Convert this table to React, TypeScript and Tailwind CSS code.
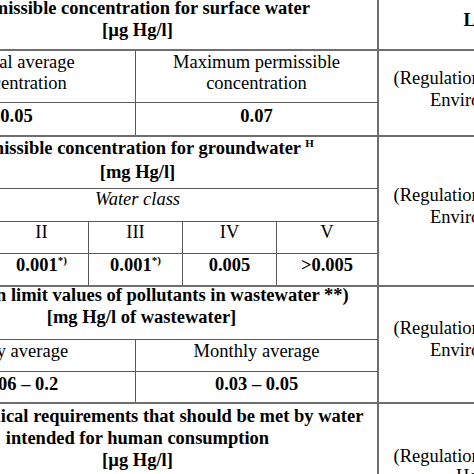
import React from "react";

const LINE = "border-[#5a5a5a]";

function Sup({ children }: { children: React.ReactNode }) {
  return <span className="relative top-[-7px] text-[11px] font-bold">{children}</span>;
}

export default function App() {
  return (
    <div className="w-[474px] h-[474px] overflow-hidden bg-white">
      <div className="ml-[-102px] mt-[-3px] w-[732px] font-['Liberation_Serif','Times_New_Roman',serif] text-[18.5px] text-black">
        {/* Header */}
        <div className="grid grid-cols-[479px_253px] border-b-2 border-[#6e6e6e]">
          <div className="h-[52px] text-center font-bold leading-[22px] whitespace-nowrap">
            Permissible concentration for surface water
            <br />[µg Hg/l]
          </div>
          <div className="border-l-2 border-[#6e6e6e] pt-[12px] pl-[6px] text-center font-bold leading-[22px] whitespace-nowrap">
            Legal basis
          </div>
        </div>

        {/* Surface water */}
        <div className="grid grid-cols-[479px_253px] border-b-2 border-[#6e6e6e]">
          <div className="flex flex-col">
            <div className={`grid grid-cols-[238px_1fr] h-[52px] border-b ${LINE}`}>
              <div className={`border-r ${LINE} pt-[1px] text-center leading-[21px]`}>
                Annual average
                <br />
                concentration
              </div>
              <div className="pt-[1px] text-center leading-[21px]">
                Maximum permissible
                <br />
                concentration
              </div>
            </div>
            <div className="grid grid-cols-[238px_1fr] h-[32px] font-bold">
              <div className={`border-r ${LINE} pt-[2px] text-center leading-[22px]`}>0.05</div>
              <div className="pt-[2px] text-center leading-[22px]">0.07</div>
            </div>
          </div>
          <div className="border-l-2 border-[#6e6e6e] pt-[16px] text-center leading-[22px] whitespace-nowrap">
            (Regulation of the Minister of
            <br />
            Environment, 2019)
          </div>
        </div>

        {/* Groundwater */}
        <div className="grid grid-cols-[479px_253px] border-b-2 border-[#6e6e6e]">
          <div className="flex flex-col">
            <div className={`h-[52px] border-b ${LINE} text-center font-bold leading-[22px] whitespace-nowrap`}>
              <div>
                Permissible concentration for groundwater <Sup>H</Sup>
                <br />
                [mg Hg/l]
              </div>
            </div>
            <div className={`h-[33px] border-b ${LINE} text-center italic leading-[22px]`}>
              <div className="-mt-[1px]">Water class</div>
            </div>
            <div className={`grid grid-cols-[97px_94px_94px_94px_100px] h-[32px] border-b ${LINE} text-center leading-[22px]`}>
              <div className={`border-r ${LINE}`}><div className="-mt-[1px]">I</div></div>
              <div className={`border-r ${LINE}`}><div className="-mt-[1px]">II</div></div>
              <div className={`border-r ${LINE}`}><div className="-mt-[1px]">III</div></div>
              <div className={`border-r ${LINE}`}><div className="-mt-[1px]">IV</div></div>
              <div><div className="-mt-[1px]">V</div></div>
            </div>
            <div className="grid grid-cols-[97px_94px_94px_94px_100px] h-[31px] text-center font-bold leading-[22px]">
              <div className={`border-r ${LINE}`}>
                0.001<Sup>*)</Sup>
              </div>
              <div className={`border-r ${LINE}`}>
                0.001<Sup>*)</Sup>
              </div>
              <div className={`border-r ${LINE}`}>
                0.001<Sup>*)</Sup>
              </div>
              <div className={`border-r ${LINE}`}>0.005</div>
              <div>&gt;0.005</div>
            </div>
          </div>
          <div className="border-l-2 border-[#6e6e6e] pt-[47px] text-center leading-[22px] whitespace-nowrap">
            (Regulation of the Minister of
            <br />
            Environment, 2019)
          </div>
        </div>

        {/* Wastewater */}
        <div className="grid grid-cols-[479px_253px] border-b-2 border-[#6e6e6e]">
          <div className="flex flex-col">
            <div className={`h-[53px] border-b ${LINE} text-center font-bold leading-[22px] whitespace-nowrap`}>
              <div className="-mt-[3px] pl-[8px]">
                Emission limit values of pollutants in wastewater **)
                <br />
                [mg Hg/l of wastewater]
              </div>
            </div>
            <div className={`grid grid-cols-[238px_1fr] h-[32px] border-b ${LINE} leading-[22px]`}>
              <div className={`border-r ${LINE} text-center`}>
                <div>Daily average</div>
              </div>
              <div className="text-center">
                <div>Monthly average</div>
              </div>
            </div>
            <div className="grid grid-cols-[238px_1fr] h-[30px] font-bold leading-[22px]">
              <div className={`border-r ${LINE} pt-[1px] text-center`}>0.006 – 0.2</div>
              <div className="pt-[1px] text-center">0.03 – 0.05</div>
            </div>
          </div>
          <div className="border-l-2 border-[#6e6e6e] pt-[30px] text-center leading-[22px] whitespace-nowrap">
            (Regulation of the Minister of
            <br />
            Environment, 2019)
          </div>
        </div>

        {/* Drinking water */}
        <div className="grid grid-cols-[479px_253px]">
          <div className="h-[90px] pt-[1px] text-center font-bold leading-[22px] whitespace-nowrap">
            <div className="pr-[14px]">Physicochemical requirements that should be met by water</div>
            <div>intended for human consumption</div>
            <div>[µg Hg/l]</div>
          </div>
          <div className="border-l-2 border-[#6e6e6e] pt-[42px] text-center leading-[20px] whitespace-nowrap">
            (Regulation of the Minister of
            <br />
            Health 2017)
          </div>
        </div>
      </div>
    </div>
  );
}
